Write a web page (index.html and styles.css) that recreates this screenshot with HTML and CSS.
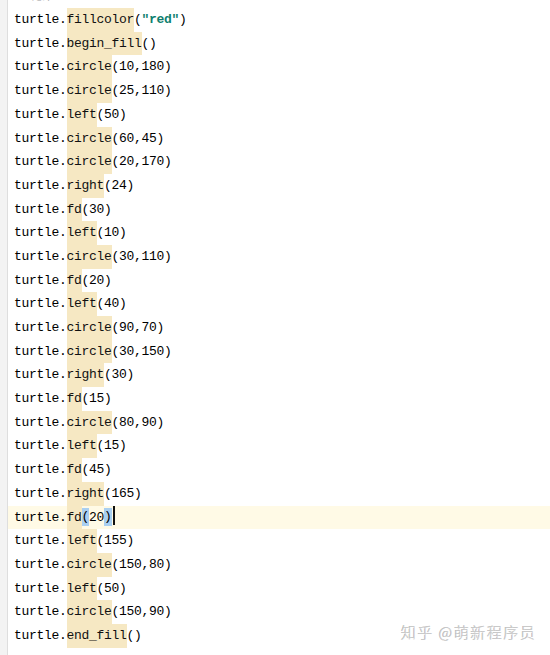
FILE: index.html
```html
<!DOCTYPE html>
<html>
<head>
<meta charset="utf-8">
<link rel="stylesheet" href="styles.css">
</head>
<body>
<div class="editor">
  <div class="gutter"></div>
  <div class="code">
    <div class="line comment"># 花朵</div>
    <div class="line">turtle.<span class="m">fillcolor</span>(<span class="s">"red"</span>)</div>
    <div class="line">turtle.<span class="m">begin_fill</span>()</div>
    <div class="line">turtle.<span class="m">circle</span>(10,180)</div>
    <div class="line">turtle.<span class="m">circle</span>(25,110)</div>
    <div class="line">turtle.<span class="m">left</span>(50)</div>
    <div class="line">turtle.<span class="m">circle</span>(60,45)</div>
    <div class="line">turtle.<span class="m">circle</span>(20,170)</div>
    <div class="line">turtle.<span class="m">right</span>(24)</div>
    <div class="line">turtle.<span class="m">fd</span>(30)</div>
    <div class="line">turtle.<span class="m">left</span>(10)</div>
    <div class="line">turtle.<span class="m">circle</span>(30,110)</div>
    <div class="line">turtle.<span class="m">fd</span>(20)</div>
    <div class="line">turtle.<span class="m">left</span>(40)</div>
    <div class="line">turtle.<span class="m">circle</span>(90,70)</div>
    <div class="line">turtle.<span class="m">circle</span>(30,150)</div>
    <div class="line">turtle.<span class="m">right</span>(30)</div>
    <div class="line">turtle.<span class="m">fd</span>(15)</div>
    <div class="line">turtle.<span class="m">circle</span>(80,90)</div>
    <div class="line">turtle.<span class="m">left</span>(15)</div>
    <div class="line">turtle.<span class="m">fd</span>(45)</div>
    <div class="line">turtle.<span class="m">right</span>(165)</div>
    <div class="line current">turtle.<span class="m">fd</span><span class="p">(</span>20<span class="p">)</span><span class="cursor"></span></div>
    <div class="line">turtle.<span class="m">left</span>(155)</div>
    <div class="line">turtle.<span class="m">circle</span>(150,80)</div>
    <div class="line">turtle.<span class="m">left</span>(50)</div>
    <div class="line">turtle.<span class="m">circle</span>(150,90)</div>
    <div class="line">turtle.<span class="m">end_fill</span>()</div>
    <div class="line"></div>
  </div>
  <div class="watermark">知乎 @萌新程序员</div>
</div>
</body>
</html>
```

FILE: styles.css
```css
html, body {
  margin: 0;
  padding: 0;
  background: #ffffff;
}
.editor {
  position: relative;
  width: 550px;
  height: 655px;
  overflow: hidden;
  display: flex;
  background: #ffffff;
}
.gutter {
  width: 7px;
  flex: none;
  background: #f3f3f3;
  border-right: 1px solid #dedede;
}
.code {
  flex: 1;
  margin-top: -15.6px;
  font-family: "Liberation Mono", monospace;
  font-size: 13px;
  letter-spacing: -0.3px;
  color: #000;
}
.line {
  height: 23.7px;
  line-height: 23.7px;
  padding-left: 6px;
  white-space: pre;
}
.comment {
  color: #999;
}
.m {
  display: inline-block;
  background: #f6e8c3;
  line-height: 23.7px;
  height: 23.7px;
  color: #111;
}
.s {
  color: #0f7f6f;
  font-weight: bold;
}
.current {
  background: #fffae6;
}
.p {
  display: inline-block;
  background: #a9cff1;
  line-height: 18px;
  height: 18px;
  vertical-align: 1px;
}
.cursor {
  display: inline-block;
  width: 2px;
  height: 19px;
  background: #111;
  vertical-align: -4px;
  margin-left: 1px;
}
.watermark {
  position: absolute;
  left: 401px;
  top: 622px;
  font-family: "Noto Sans CJK SC", sans-serif;
  font-size: 15px;
  font-weight: 300;
  line-height: 20px;
  color: #cdcdcd;
  text-shadow: 1px 1px 0 #ffffff, -0.5px -0.5px 0 #a8a8a8;
  letter-spacing: 1.5px;
}
```
